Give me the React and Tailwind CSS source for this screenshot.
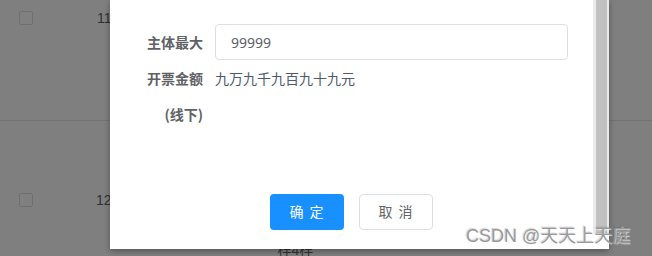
export default function App() {
  const font = { fontFamily: '"Liberation Sans", "Noto Sans CJK SC", sans-serif' };
  return (
    <div className="relative w-[652px] h-[256px] overflow-hidden bg-[#7f7f7f]" style={font}>
      {/* background table (under overlay) */}
      <div className="flex flex-col">
        <div className="h-[121px] border-b border-[#727272] flex items-start pt-[11px] pl-[19px]">
          <div className="w-[14px] h-[14px] border border-[#6e6f73] rounded-[2px] bg-[#808080]" />
          <div className="ml-[64px] mt-[-2px] text-[14px] leading-[18px] text-[#303133]">11</div>
        </div>
        <div className="flex items-start pt-[72px] pl-[19px]">
          <div className="w-[14px] h-[14px] border border-[#6e6f73] rounded-[2px] bg-[#808080]" />
          <div className="ml-[63px] mt-[-2px] text-[14px] leading-[18px] text-[#303133]">12</div>
          <div className="ml-[166px] mt-[48px] text-[14px] leading-[18px] text-[#303133]">样4样</div>
        </div>
      </div>

      {/* dialog */}
      <div className="absolute left-[110px] top-0 w-[499px] h-[249px] bg-white flex shadow-[0_2px_6px_rgba(0,0,0,0.35)]">
        <div className="w-[483px] flex flex-col pt-[24px]">
          <div className="flex">
            <div className="w-[105px] flex justify-end pr-[12px]">
              <span className="block w-[58px] text-right text-[14px] leading-[36px] font-bold text-[#606266]" style={{ fontFamily: '"Noto Sans CJK SC", sans-serif' }}>
                主体最大开票金额(线下)
              </span>
            </div>
            <div className="w-[353px] flex flex-col">
              <div className="h-[36px] border border-[#dcdfe6] rounded-[4px] flex items-center px-[15px] text-[14px] text-[#606266]" style={{ fontFamily: '"Noto Sans", sans-serif' }}>
                99999
              </div>
              <div className="text-[14px] leading-[36px] text-[#4e5a6e]" style={{ fontFamily: '"Noto Sans CJK SC", sans-serif' }}>
                九万九千九百九十九元
              </div>
            </div>
          </div>
          <div className="flex justify-center gap-[15px] mt-[62px]">
            <button className="w-[74px] h-[36px] rounded-[4px] bg-[#1890ff] text-white text-[14px] leading-none tracking-[1px]" style={{ fontFamily: '"Liberation Sans", "Noto Sans CJK SC", sans-serif' }}>
              确 定
            </button>
            <button className="w-[74px] h-[36px] rounded-[4px] bg-white border border-[#dcdfe6] text-[#606266] text-[14px] leading-none tracking-[1px]" style={{ fontFamily: '"Liberation Sans", "Noto Sans CJK SC", sans-serif' }}>
              取 消
            </button>
          </div>
        </div>
        <div className="w-[16px] flex flex-col">
          <div className="h-[233px] bg-[#eaeaea] pl-[3px] pr-[2px]">
            <div className="h-full bg-[#c1c1c1]" />
          </div>
        </div>
      </div>

      {/* watermark */}
      <div
        className="absolute left-[466px] top-[224px] text-[18px] leading-[24px] text-[#999999] whitespace-nowrap"
        style={{ fontFamily: '"Liberation Sans", "Noto Sans CJK SC", sans-serif', textShadow: '1px 1px 1px rgba(255,255,255,0.7), -1px -1px 1px rgba(80,80,80,0.25)' }}
      >
        CSDN @天天上天庭
      </div>
    </div>
  );
}
